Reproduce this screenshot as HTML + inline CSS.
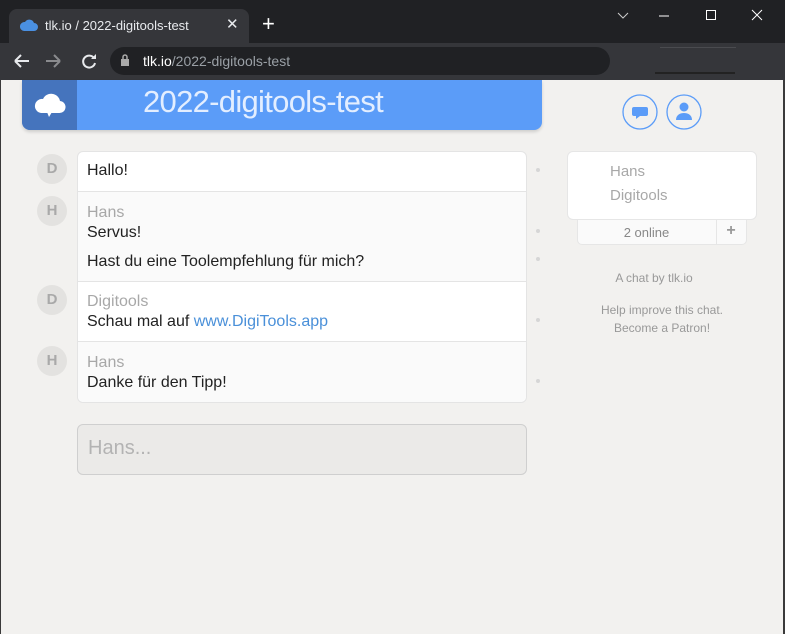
<!DOCTYPE html>
<html><head><meta charset="utf-8"><style>
*{margin:0;padding:0;box-sizing:border-box}
body{width:785px;height:634px;overflow:hidden;background:#f2f1ef;font-family:"Liberation Sans",sans-serif;position:relative}
.a{position:absolute}
.av{position:absolute;left:37px;width:30px;height:30px;border-radius:50%;background:#e3e2e0;color:#a9a9a9;font-weight:bold;font-size:15px;text-align:center;line-height:30px}
.row{position:absolute;left:77px;width:450px;border-top:1px solid #e4e4e4;padding-left:10px;font-size:16px;color:#222}
.nm{color:#a8a8a8}
.dot{position:absolute;left:536px;width:4px;height:4px;border-radius:50%;background:#d6d6d6}
</style></head><body>
<div class="a" style="left:0;top:0;width:785px;height:43px;background:#202124"></div>
<div class="a" style="left:9px;top:9px;width:240px;height:36px;background:#35363a;border-radius:8px 8px 0 0"></div>
<svg class="a" style="left:20px;top:18px" width="18" height="14" viewBox="0 0 18 14"><path d="M4 13h10a4 4 0 0 0 0-8 5 5 0 0 0-9-1 4 4 0 0 0-1 9z" fill="#4a90e2"/></svg>
<div class="a" style="left:45px;top:18px;color:#e8eaed;font-size:13px">tlk.io / 2022-digitools-test</div>
<div class="a" style="left:226px;top:15px;color:#e8eaed;font-size:15px">✕</div>
<div class="a" style="left:262px;top:11px;color:#fff;font-size:22px">+</div>
<svg class="a" style="left:616px;top:8px" width="160" height="18"><path d="M2 5l5 5 5-5" stroke="#ccc" fill="none"/><path d="M43 8h10" stroke="#fff"/><rect x="90.5" y="2.5" width="9" height="9" stroke="#fff" fill="none"/><path d="M136 2l10 10M146 2l-10 10" stroke="#fff"/></svg>
<div class="a" style="left:0;top:43px;width:785px;height:37px;background:#35363a"></div>
<svg class="a" style="left:12px;top:52px" width="90" height="18"><path d="M3 9h14M3 9l6-6M3 9l6 6" stroke="#e8eaed" stroke-width="2" fill="none"/><path d="M48 9h-14M48 9l-6-6M48 9l-6 6" stroke="#8a8b8e" stroke-width="2" fill="none"/><path d="M82 6a6 6 0 1 0 1 5" stroke="#e8eaed" stroke-width="2" fill="none"/><path d="M84 2v5h-5z" fill="#e8eaed"/></svg>
<div class="a" style="left:110px;top:47px;width:500px;height:28px;background:#202124;border-radius:14px"></div>
<svg class="a" style="left:120px;top:54px" width="10" height="13"><rect x="1" y="5" width="8" height="7" fill="#aaa"/><path d="M3 5V3a2 2 0 0 1 4 0v2" stroke="#aaa" fill="none" stroke-width="1.5"/></svg>
<div class="a" style="left:143px;top:53px;font-size:14px;color:#fff">tlk.io<span style="color:#9aa0a6">/2022-digitools-test</span></div>
<div class="a" style="left:660px;top:47px;width:76px;height:1px;background:#4a4b4f"></div>
<div class="a" style="left:655px;top:72px;width:80px;height:2px;background:#222"></div>
<div class="a" style="left:783px;top:80px;width:2px;height:554px;background:#3a3a3a"></div>
<div class="a" style="left:0;top:80px;width:1px;height:554px;background:#3a3a3a"></div>
<div class="a" style="left:22px;top:80px;width:520px;height:50px;background:#5b9cf8;border-radius:0 0 8px 8px;box-shadow:0 2px 3px rgba(0,0,0,.15);overflow:hidden"><div class="a" style="left:0;top:0;width:55px;height:50px;background:#4574bd"></div></div>
<svg class="a" style="left:33px;top:90px" width="34" height="30" viewBox="0 0 34 30"><path d="M8 23h18a6 6 0 0 0 1-12 9 9 0 0 0-17-2 7 7 0 0 0-2 14z" fill="#fff"/><path d="M14 22l2 5 3-5z" fill="#fff"/></svg>
<div class="a" style="left:143px;top:84px;font-size:31px;color:#e3eeff;letter-spacing:-0.7px">2022-digitools-test</div>
<div class="a" style="left:77px;top:151px;width:450px;height:252px;background:#fff;border:1px solid #e4e4e4;border-radius:6px"></div>
<div class="a" style="left:78px;top:192px;width:448px;height:89px;background:#fafafa"></div>
<div class="a" style="left:78px;top:342px;width:448px;height:60px;background:#fafafa;border-radius:0 0 6px 6px"></div>
<div class="av" style="top:154px">D</div><div class="av" style="top:196px">H</div><div class="av" style="top:285px">D</div><div class="av" style="top:346px">H</div>
<div class="row" style="top:151px;border:none;padding-top:11px">Hallo!</div>
<div class="row" style="top:191px;padding-top:11px;line-height:20px"><div class="nm">Hans</div><div>Servus!</div><div style="margin-top:9px">Hast du eine Toolempfehlung für mich?</div></div>
<div class="row" style="top:281px;padding-top:10px;line-height:20px"><div class="nm">Digitools</div><div>Schau mal auf <span style="color:#4a90d9">www.DigiTools.app</span></div></div>
<div class="row" style="top:341px;padding-top:11px;line-height:20px"><div class="nm">Hans</div><div>Danke für den Tipp!</div></div>
<div class="dot" style="top:168px"></div><div class="dot" style="top:229px"></div><div class="dot" style="top:257px"></div><div class="dot" style="top:318px"></div><div class="dot" style="top:379px"></div>
<div class="a" style="left:77px;top:424px;width:450px;height:51px;background:#ebeae8;border:1px solid #cfcfcf;border-radius:6px;padding:12px 10px;font-size:20px;color:#b3b3b3">Hans...</div>
<svg class="a" style="left:621px;top:94px" width="84" height="37"><circle cx="19" cy="18" r="17" fill="none" stroke="#5b9cf8" stroke-width="1.3"/><path d="M13 13h12a2 2 0 0 1 2 2v5a2 2 0 0 1-2 2h-6l-4 3v-3h-2a2 2 0 0 1-2-2v-5a2 2 0 0 1 2-2z" fill="#5b9cf8"/><circle cx="63" cy="18" r="17" fill="none" stroke="#5b9cf8" stroke-width="1.3"/><circle cx="63" cy="13" r="4.5" fill="#5b9cf8"/><path d="M55 26c0-5 4-7 8-7s8 2 8 7z" fill="#5b9cf8"/></svg>
<div class="a" style="left:567px;top:151px;width:190px;height:69px;background:#fff;border:1px solid #e6e6e6;border-radius:6px;padding:8px 0 0 42px;font-size:15px;color:#a8a8a8;line-height:24px">Hans<br>Digitools</div>
<div class="a" style="left:577px;top:220px;width:170px;height:25px;background:#fafafa;border:1px solid #e6e6e6;border-top:none;border-radius:0 0 5px 5px"></div>
<div class="a" style="left:716px;top:220px;width:1px;height:25px;background:#e6e6e6"></div>
<div class="a" style="left:577px;top:225px;width:139px;text-align:center;font-size:13px;color:#888">2 online</div>
<div class="a" style="left:716px;top:222px;width:30px;text-align:center;font-size:16px;color:#999;font-weight:bold">+</div>
<div class="a" style="left:554px;top:271px;width:200px;text-align:center;font-size:12px;color:#999">A chat by tlk.io</div>
<div class="a" style="left:562px;top:301px;width:200px;text-align:center;font-size:12px;color:#999;line-height:18px">Help improve this chat.<br>Become a Patron!</div>
</body></html>
